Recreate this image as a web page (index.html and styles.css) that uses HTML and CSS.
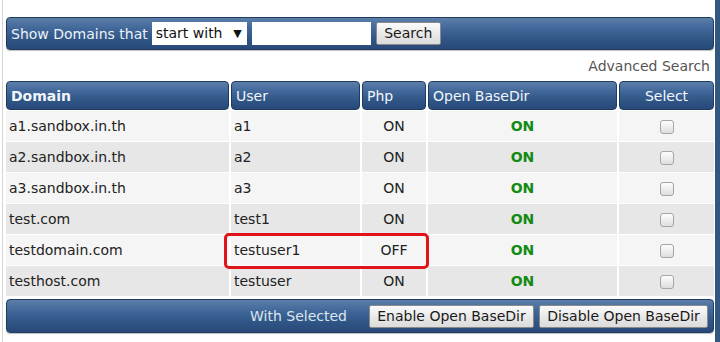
FILE: index.html
```html
<!DOCTYPE html>
<html>
<head>
<meta charset="utf-8">
<link rel="stylesheet" href="styles.css">
</head>
<body>
<div class="frame">
  <div class="page">
    <form class="bar search-bar">
      <span class="bar-label">Show Domains that</span>
      <span class="select">start with <span class="caret">▼</span></span>
      <span class="text-input"></span>
      <span class="btn btn-search">Search</span>
    </form>
    <div class="adv"><span>Advanced Search</span></div>
    <div class="table-wrap">
      <table class="domains">
        <colgroup>
          <col class="c-domain"><col class="c-user"><col class="c-php"><col class="c-obd"><col class="c-sel">
        </colgroup>
        <thead>
          <tr>
            <th class="sorted">Domain</th>
            <th>User</th>
            <th>Php</th>
            <th>Open BaseDir</th>
            <th class="center">Select</th>
          </tr>
        </thead>
        <tbody>
          <tr><td>a1.sandbox.in.th</td><td>a1</td><td class="center">ON</td><td class="center on">ON</td><td class="center"><span class="cb"></span></td></tr>
          <tr><td>a2.sandbox.in.th</td><td>a2</td><td class="center">ON</td><td class="center on">ON</td><td class="center"><span class="cb"></span></td></tr>
          <tr><td>a3.sandbox.in.th</td><td>a3</td><td class="center">ON</td><td class="center on">ON</td><td class="center"><span class="cb"></span></td></tr>
          <tr><td>test.com</td><td>test1</td><td class="center">ON</td><td class="center on">ON</td><td class="center"><span class="cb"></span></td></tr>
          <tr><td>testdomain.com</td><td>testuser1</td><td class="center">OFF</td><td class="center on">ON</td><td class="center"><span class="cb"></span></td></tr>
          <tr><td>testhost.com</td><td>testuser</td><td class="center">ON</td><td class="center on">ON</td><td class="center"><span class="cb"></span></td></tr>
        </tbody>
      </table>
      <div class="highlight"></div>
    </div>
    <div class="bar footer-bar">
      <span class="bar-label with-selected">With Selected</span>
      <span class="btn btn-enable">Enable Open BaseDir</span>
      <span class="btn btn-disable">Disable Open BaseDir</span>
    </div>
  </div>
  <div class="edge"></div>
</div>
</body>
</html>
```

FILE: styles.css
```css
* { box-sizing: border-box; }
html, body { margin: 0; padding: 0; background: #fff; }
body {
  font-family: "DejaVu Sans", Verdana, sans-serif;
  font-size: 14px;
  color: #222;
  width: 720px;
  height: 342px;
  overflow: hidden;
}
.frame {
  display: flex;
  height: 342px;
  padding-left: 2px;
}
.page {
  flex: 1;
  border-left: 1px solid #d6d6d6;
  padding: 17px 0 0 3px;
}
.edge {
  width: 5px;
  margin-left: 1px;
  background: #33587f;
}
.bar {
  display: flex;
  align-items: center;
  width: 708px;
  margin: 0;
  border: 1px solid #1f3b5e;
  border-radius: 4px;
  background: linear-gradient(#5b7fa8 0%, #41679a 35%, #2f5585 70%, #28497a 100%);
  box-shadow: 0 1px 1px rgba(0,0,0,0.25);
}
.search-bar { height: 33px; padding-left: 4px; }
.bar-label { color: #eef2f7; }
.select {
  margin-left: 4px;
  width: 95px;
  height: 23px;
  background: #fff;
  color: #111;
  padding-left: 4px;
  line-height: 23px;
  display: flex;
  justify-content: space-between;
  padding-right: 5px;
}
.caret { font-size: 11px; color: #111; }
.text-input {
  margin-left: 5px;
  width: 119px;
  height: 23px;
  background: #fff;
}
.btn {
  height: 23px;
  line-height: 21px;
  border: 1px solid #8a8a8a;
  border-radius: 2px;
  background: linear-gradient(#fbfbfb, #e6e6e6 60%, #dcdcdc);
  color: #1a1a1a;
  text-align: center;
}
.btn-search { margin-left: 5px; width: 65px; }
.adv {
  display: flex;
  justify-content: flex-end;
  height: 30px;
  padding: 7px 4px 0 0;
  color: #555;
  line-height: 18px;
}
.table-wrap {
  position: relative;
  width: 708px;
}
.domains {
  table-layout: fixed;
  border-collapse: separate;
  border-spacing: 2px 1px;
  width: 712px;
  margin: 0 -2px;
}
.c-domain { width: 223px; }
.c-user { width: 129px; }
.c-php { width: 64px; }
.c-obd { width: 189px; }
.c-sel { width: 95px; }
th {
  height: 29px;
  padding: 0 4px;
  text-align: left;
  font-weight: normal;
  color: #f2f5f9;
  border: 1px solid #1f3b5e;
  border-radius: 4px;
  background: linear-gradient(#5b7fa8 0%, #41679a 35%, #2f5585 70%, #28497a 100%);
}
th.sorted { font-weight: bold; }
td {
  height: 30px;
  padding: 0 3px;
  white-space: nowrap;
}
tbody tr:nth-child(odd) td { background: #f5f5f5; }
tbody tr:nth-child(even) td { background: #e7e7e7; }
.center { text-align: center; }
td.center, th.center { padding: 0; }
.on { color: #138a13; font-weight: bold; }
.cb {
  display: inline-block;
  width: 14px;
  height: 14px;
  vertical-align: middle;
  border: 1px solid #a5a5a5;
  border-radius: 3px;
  background: linear-gradient(#fdfdfd, #dedede);
}
.highlight {
  position: absolute;
  left: 218px;
  top: 153px;
  width: 205px;
  height: 36px;
  border: 3px solid #e0141b;
  border-radius: 5px;
}
.footer-bar {
  margin-top: 2px;
  height: 34px;
  padding-right: 5px;
}
.with-selected {
  flex: 1;
  text-align: right;
  padding-right: 22px;
  color: #dde5ef;
}
.btn-enable { width: 165px; }
.btn-disable { width: 169px; margin-left: 5px; }
```
